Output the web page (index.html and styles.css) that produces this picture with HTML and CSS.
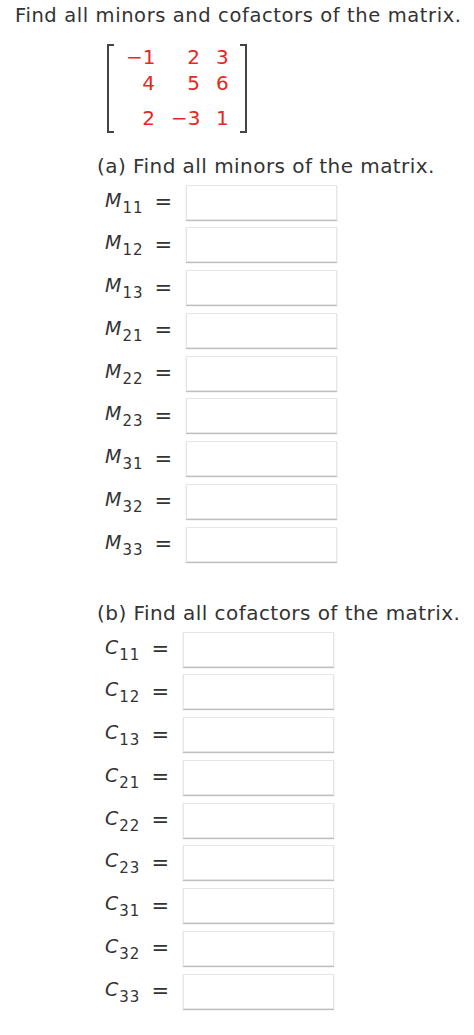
FILE: index.html
```html
<!DOCTYPE html>
<html>
<head>
<meta charset="utf-8">
<link rel="stylesheet" href="styles.css">
</head>
<body>
<div class="title">Find all minors and cofactors of the matrix.</div>
<div class="matrix">
  <div class="br br-l"></div>
  <div class="cells">
    <span>−1</span><span>2</span><span>3</span>
    <span>4</span><span>5</span><span>6</span>
    <span class="r3">2</span><span class="r3">−3</span><span class="r3">1</span>
  </div>
  <div class="br br-r"></div>
</div>

<div class="part part-a">
  <div class="part-label">(a) Find all minors of the matrix.</div>
  <div class="row"><span class="lbl"><span class="var">M</span><sub>11</sub></span><span class="eq">=</span><span class="box"></span></div>
  <div class="row"><span class="lbl"><span class="var">M</span><sub>12</sub></span><span class="eq">=</span><span class="box"></span></div>
  <div class="row"><span class="lbl"><span class="var">M</span><sub>13</sub></span><span class="eq">=</span><span class="box"></span></div>
  <div class="row"><span class="lbl"><span class="var">M</span><sub>21</sub></span><span class="eq">=</span><span class="box"></span></div>
  <div class="row"><span class="lbl"><span class="var">M</span><sub>22</sub></span><span class="eq">=</span><span class="box"></span></div>
  <div class="row"><span class="lbl"><span class="var">M</span><sub>23</sub></span><span class="eq">=</span><span class="box"></span></div>
  <div class="row"><span class="lbl"><span class="var">M</span><sub>31</sub></span><span class="eq">=</span><span class="box"></span></div>
  <div class="row"><span class="lbl"><span class="var">M</span><sub>32</sub></span><span class="eq">=</span><span class="box"></span></div>
  <div class="row"><span class="lbl"><span class="var">M</span><sub>33</sub></span><span class="eq">=</span><span class="box"></span></div>
</div>

<div class="part part-b">
  <div class="part-label">(b) Find all cofactors of the matrix.</div>
  <div class="row"><span class="lbl"><span class="var">C</span><sub>11</sub></span><span class="eq">=</span><span class="box"></span></div>
  <div class="row"><span class="lbl"><span class="var">C</span><sub>12</sub></span><span class="eq">=</span><span class="box"></span></div>
  <div class="row"><span class="lbl"><span class="var">C</span><sub>13</sub></span><span class="eq">=</span><span class="box"></span></div>
  <div class="row"><span class="lbl"><span class="var">C</span><sub>21</sub></span><span class="eq">=</span><span class="box"></span></div>
  <div class="row"><span class="lbl"><span class="var">C</span><sub>22</sub></span><span class="eq">=</span><span class="box"></span></div>
  <div class="row"><span class="lbl"><span class="var">C</span><sub>23</sub></span><span class="eq">=</span><span class="box"></span></div>
  <div class="row"><span class="lbl"><span class="var">C</span><sub>31</sub></span><span class="eq">=</span><span class="box"></span></div>
  <div class="row"><span class="lbl"><span class="var">C</span><sub>32</sub></span><span class="eq">=</span><span class="box"></span></div>
  <div class="row"><span class="lbl"><span class="var">C</span><sub>33</sub></span><span class="eq">=</span><span class="box"></span></div>
</div>
</body>
</html>
```

FILE: styles.css
```css
html, body {
  margin: 0;
  padding: 0;
  background: #fff;
}
body {
  font-family: "DejaVu Sans", Verdana, sans-serif;
  color: #333;
  width: 474px;
}
.title {
  font-size: 19.5px;
  letter-spacing: 0.6px;
  line-height: 24px;
  padding: 4px 0 0 15px;
  white-space: nowrap;
}
.matrix {
  display: flex;
  margin: 16px 0 0 107px;
  height: 89px;
}
.br {
  width: 5px;
  border: 2px solid #444;
}
.br-l { border-right: none; }
.br-r { border-left: none; }
.cells {
  display: grid;
  grid-template-columns: 29px 29px 12px;
  column-gap: 16px;
  grid-auto-rows: 26px;
  padding: 0 12px 0 12px;
  color: #e8271e;
  font-size: 20px;
  line-height: 26px;
  text-align: right;
}
.cells .r3 {
  margin-top: 9px;
}
.part {
  padding-left: 97px;
}
.part-label {
  font-size: 20px;
  letter-spacing: 0.45px;
  line-height: 24px;
  margin-bottom: 7px;
  white-space: nowrap;
}
.part-a { margin-top: 21px; }
.part-b { margin-top: 40px; }
.row {
  display: flex;
  align-items: center;
  height: 34px;
  margin-bottom: 8.75px;
  padding-left: 8px;
}
.lbl {
  font-size: 19px;
  line-height: 1;
  margin-top: 2px;
}
.var {
  font-style: italic;
}
.lbl sub {
  font-size: 15px;
  letter-spacing: 1px;
  vertical-align: -6px;
  line-height: 1;
  margin-left: 1px;
}
.eq {
  font-size: 21px;
  margin: 0 14px 0 11px;
}
.box {
  width: 149px;
  height: 33px;
  background: #fff;
  border: 1px solid #e6e6e6;
  box-shadow: 0 1px 1px rgba(0,0,0,0.25);
}
```
